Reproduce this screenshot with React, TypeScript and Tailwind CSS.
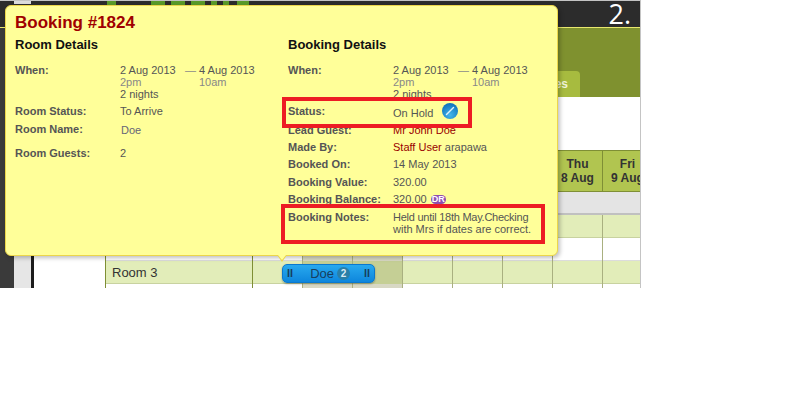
import React from 'react';

const days = [
  ['Fri', '2 Aug'], ['Sat', '3 Aug'], ['Sun', '4 Aug'], ['Mon', '5 Aug'],
  ['Tue', '6 Aug'], ['Wed', '7 Aug'], ['Thu', '8 Aug'], ['Fri', '9 Aug'],
];

const cols = 'grid grid-cols-[147px_repeat(8,50px)]';

const Row: React.FC<{ label: string; className?: string; children: React.ReactNode }> = ({ label, className, children }) => (
  <div className={`flex leading-[12px] ${className ?? ''}`}>
    <div className="w-[105px] shrink-0 font-bold text-[#555]">{label}</div>
    <div className="flex-1 text-[#555]">{children}</div>
  </div>
);

const WhenValue = () => (
  <div className="flex">
    <div className="w-[65px]">
      <div>2 Aug 2013</div>
      <div className="text-[#888]">2pm</div>
      <div>2 nights</div>
    </div>
    <div className="w-[14px] text-[#888]">—</div>
    <div>
      <div>4 Aug 2013</div>
      <div className="text-[#888]">10am</div>
    </div>
  </div>
);

const TableRow: React.FC<{ name: string; rowClass: string; line: string; active?: string }> = ({ name, rowClass, line, active }) => (
  <div className={`${cols} h-[23px] border-b ${rowClass} ${line}`}>
    <div className="border-l border-[#7f8f35] pl-[6px] text-[13px] leading-[23px] text-[#333]">{name}</div>
    {days.map((d, i) => (
      <div
        key={d[0] + d[1]}
        className={`border-l ${i === 0 ? 'border-[#7f8f35]' : 'border-[#a9b080]'} ${active && (i === 1 || i === 2) ? active : ''}`}
      />
    ))}
  </div>
);

export default function App() {
  return (
    <div className="min-h-screen bg-white font-['Liberation_Sans',Arial,sans-serif]">
      <div className="relative flex h-[288px] w-[641px] flex-col overflow-hidden border-r border-t border-[#c4c4c4] bg-white">
        {/* top bar */}
        <div className="relative flex h-[27px] shrink-0 items-center justify-end border-b border-[#e8e86e] bg-[#2c2c2c] pr-[9px]">
          <span className="relative top-[-1px] font-['Open_Sans',sans-serif] text-[27px] leading-[27px] text-white">2.</span>
          <div className="absolute left-[14px] top-0 h-[3px] w-[17px] bg-[#dcdcdc]" />
          <svg className="absolute left-[105px] top-0" width="150" height="6" viewBox="0 0 150 6">
            <g fill="#5a9a2a">
              <rect x="2" y="0" width="9" height="4" />
              <rect x="46" y="0" width="14" height="5" />
              <rect x="66" y="0" width="14" height="5" />
              <rect x="86" y="0" width="14" height="5" />
              <rect x="106" y="0" width="6" height="5" />
              <rect x="118" y="0" width="6" height="5" />
              <rect x="132" y="0" width="12" height="5" />
            </g>
          </svg>
        </div>

        <div className="flex flex-1">
          <div className="w-[14px] bg-[#3a3a3a]" />
          <div className="w-[17px] bg-[#e6e6e6]" />
          <div className="w-[3px] bg-[#1c1c1c]" />
          <div className="flex flex-1 flex-col overflow-hidden">
            {/* olive band and tabs */}
            <div className="flex h-[69px] items-end justify-end bg-[#7f912f] pr-[60px]">
              <div className="flex h-[26px] w-[90px] items-center justify-end rounded-tr-[4px] bg-[#a7bb3f] pr-[12px] text-[12px] font-bold text-[#eef2d8]">
                Invoices
              </div>
            </div>
            <div className="h-[53px]" />
            {/* booking table */}
            <div className="ml-[71px] overflow-hidden">
              <div className={`${cols} h-[42px] border-y border-[#7f8f35] bg-[#b1c550]`}>
                <div className="border-l border-[#7f8f35]" />
                {days.map((d) => (
                  <div key={d[0] + d[1]} className="flex flex-col items-center justify-center whitespace-nowrap border-l border-[#7f8f35] text-[12px] font-bold leading-[14px] text-[#333]">
                    <span>{d[0]}</span>
                    <span>{d[1]}</span>
                  </div>
                ))}
              </div>
              <div className="h-[23px] border-b-2 border-[#c0c0c0] bg-[#e4e4e4]" />
              <TableRow name="Room 1" rowClass="bg-[#e2edb9]" line="border-[#c8d2a0]" />
              <TableRow name="Room 2" rowClass="bg-white" line="border-[#dcdcdc]" active="bg-[#d8d8c4]" />
              <TableRow name="Room 3" rowClass="bg-[#e2edb9]" line="border-[#c8d2a0]" active="bg-[#c5cf95]" />
              <TableRow name="Room 4" rowClass="bg-white" line="border-[#dcdcdc]" active="bg-[#d8d8c4]" />
            </div>
          </div>
        </div>

        {/* booking bar */}
        <div className="absolute left-[282px] top-[263px] flex h-[19px] w-[93px] items-center rounded-[5px] border border-[#0b78cf] bg-gradient-to-b from-[#28a9ee] to-[#0d86dc] px-[4px] text-[#173f60] shadow-[0_1px_2px_rgba(0,0,0,0.35)]">
          <span className="text-[11px] font-bold leading-none">ll</span>
          <span className="ml-[17px] text-[13px] leading-none">Doe</span>
          <span className="ml-[3px] flex h-[13px] w-[13px] items-center justify-center rounded-full bg-[#2a7fa8] text-[10px] font-bold leading-none text-[#dcecf5]">2</span>
          <span className="ml-auto text-[11px] font-bold leading-none">ll</span>
        </div>

        {/* tooltip */}
        <div className="absolute left-[5px] top-[4px] h-[251px] w-[553px] rounded-[6px] border border-[#ecd64a] bg-[#ffff99] pl-[9px] pt-[7px] text-[11px] shadow-[2px_2px_4px_rgba(0,0,0,0.25)]">
          <div className="text-[17px] font-bold leading-[20px] text-[#a00000]">Booking #1824</div>
          <div className="mt-[4px] flex">
            <div className="w-[273px] shrink-0">
              <div className="text-[13px] font-bold leading-[16px] text-[#111]">Room Details</div>
              <div className="mt-[11px]">
                <Row label="When:"><WhenValue /></Row>
                <Row label="Room Status:" className="mt-[5px]">To Arrive</Row>
                <Row label="Room Name:" className="mt-[6px]"><span className="relative top-[1px] ml-[1px] text-[#667]">Doe</span></Row>
                <Row label="Room Guests:" className="mt-[12px]">2</Row>
              </div>
            </div>
            <div className="flex-1 pr-[10px]">
              <div className="text-[13px] font-bold leading-[16px] text-[#111]">Booking Details</div>
              <div className="mt-[11px]">
                <Row label="When:"><WhenValue /></Row>
                <Row label="Status:" className="mt-[5px]">
                  <div className="relative top-[2px]">
                    On Hold
                    <svg className="absolute left-[49px] top-[-4px]" width="16" height="16" viewBox="0 0 16 16">
                      <defs>
                        <radialGradient id="holdBall" cx="0.5" cy="0.75" r="0.7">
                          <stop offset="0" stopColor="#45b6ea" />
                          <stop offset="1" stopColor="#0f74bd" />
                        </radialGradient>
                      </defs>
                      <circle cx="8" cy="8" r="8" fill="url(#holdBall)" />
                      <path d="M4.5 11.5 L11.5 4.5" stroke="#dff2fb" strokeWidth="1.5" strokeLinecap="round" />
                    </svg>
                  </div>
                </Row>
                <Row label="Lead Guest:" className="mt-[7px]"><span className="text-[#990000]">Mr John Doe</span></Row>
                <Row label="Made By:" className="mt-[5px]"><span className="text-[#990000]">Staff User</span> arapawa</Row>
                <Row label="Booked On:" className="mt-[5px]">14 May 2013</Row>
                <Row label="Booking Value:" className="mt-[6px]">320.00</Row>
                <Row label="Booking Balance:" className="mt-[5px]">
                  <div className="flex items-center">
                    320.00
                    <span className="ml-[4px] flex h-[9px] w-[15px] items-center justify-center rounded-full bg-[#8e4db0] text-[9px] font-bold leading-none text-white">DR</span>
                  </div>
                </Row>
                <Row label="Booking Notes:" className="mt-[6px]"><span className="tracking-[-0.25px]">Held until 18th May.Checking</span><br />with Mrs if dates are correct.</Row>
              </div>
            </div>
          </div>
        </div>

        {/* tooltip arrow */}
        <div className="absolute left-[277px] top-[254px] h-0 w-0 border-x-[5px] border-t-[7px] border-x-transparent border-t-[#ecd64a]" />
        <div className="absolute left-[278px] top-[254px] h-0 w-0 border-x-[4px] border-t-[5px] border-x-transparent border-t-[#ffff99]" />

        {/* annotation boxes */}
        <div className="absolute left-[282px] top-[96px] h-[31px] w-[190px] border-4 border-[#ed1c24]" />
        <div className="absolute left-[281px] top-[203px] h-[40px] w-[264px] border-4 border-[#ed1c24]" />
      </div>
    </div>
  );
}
